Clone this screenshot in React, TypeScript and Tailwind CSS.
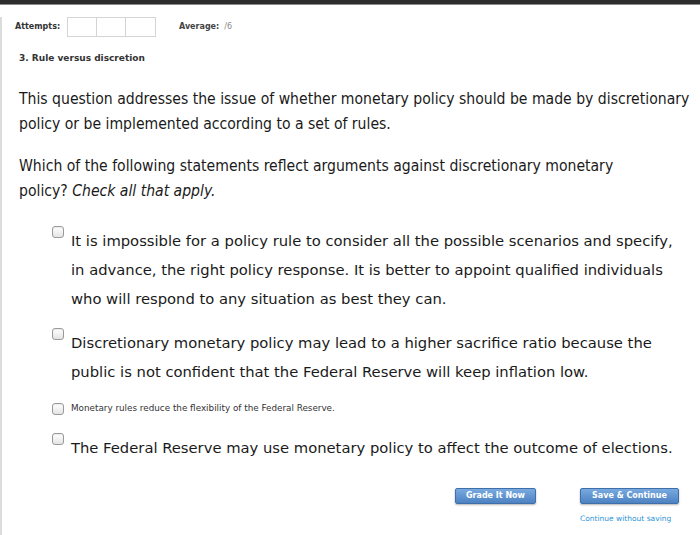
import React from "react";

const OPTIONS = [
  {
    id: "a",
    size: "large",
    lines: [
      "It is impossible for a policy rule to consider all the possible scenarios and specify,",
      "in advance, the right policy response. It is better to appoint qualified individuals",
      "who will respond to any situation as best they can.",
    ],
  },
  {
    id: "b",
    size: "large",
    lines: [
      "Discretionary monetary policy may lead to a higher sacrifice ratio because the",
      "public is not confident that the Federal Reserve will keep inflation low.",
    ],
  },
  {
    id: "c",
    size: "small",
    lines: ["Monetary rules reduce the flexibility of the Federal Reserve."],
  },
  {
    id: "d",
    size: "large",
    lines: ["The Federal Reserve may use monetary policy to affect the outcome of elections."],
  },
];

function Box() {
  return (
    <span className="block w-[12px] h-[12px] rounded-[3px] border border-[#9a9a9a] bg-gradient-to-b from-white to-[#e4e4e4] shadow-[inset_0_1px_1px_rgba(0,0,0,0.08)]" />
  );
}

export default function App() {
  return (
    <div className="w-[700px] h-[535px] bg-white overflow-hidden font-['DejaVu_Sans',sans-serif] text-[#222]">
      <div className="h-[5px] bg-[#2d2d2d] border-b border-[#8a8a8a]" />
      <div className="h-[530px] border-l-2 border-[#dcdcdc] pl-[13px]">
        <div className="flex items-center h-[20px] mt-[12px] text-[8px]">
          <span className="font-bold text-[#333] w-[52px]">Attempts:</span>
          <div className="flex h-[20px] border border-[#d4d4d4]">
            <div className="w-[29px] border-r border-[#d4d4d4]" />
            <div className="w-[29px] border-r border-[#d4d4d4]" />
            <div className="w-[29px]" />
          </div>
          <span className="ml-[23px] font-bold text-[#444]">Average:</span>
          <span className="ml-[5px] text-[#888]">/6</span>
        </div>

        <div className="mt-[15px] ml-[4px] text-[9px] font-bold text-[#333]">3. Rule versus discretion</div>

        <div className="ml-[4px] mt-[21px] font-['DejaVu_Sans_Condensed','DejaVu_Sans',sans-serif] text-[15.6px] leading-[25px] text-[#1a1a1a]">
          <p>
            This question addresses the issue of whether monetary policy should be made by discretionary
            <br />
            policy or be implemented according to a set of rules.
          </p>
          <p className="mt-[17px]">
            Which of the following statements reflect arguments against discretionary monetary
            <br />
            policy? <i>Check all that apply.</i>
          </p>
        </div>

        <div className="ml-[37px] mt-[22px] flex flex-col">
          {OPTIONS.map((opt) =>
            opt.size === "large" ? (
              <div key={opt.id} className="flex items-start gap-[7px] mb-[15px]">
                <span className="mt-0">
                  <Box />
                </span>
                <div className="text-[14.75px] leading-[29px] text-[#1a1a1a]">
                  {opt.lines.map((l, i) => (
                    <div key={i}>{l}</div>
                  ))}
                </div>
              </div>
            ) : (
              <div key={opt.id} className="flex items-center gap-[7px] mb-[16px] h-[16px]">
                <Box />
                <span className="text-[8.8px] text-[#333]">{opt.lines[0]}</span>
              </div>
            )
          )}
        </div>

        <div className="flex justify-end pr-[21px] mt-[11px] gap-[44px]">
          <button className="w-[81px] h-[16px] rounded-[2px] border border-[#3f6fa8] bg-gradient-to-b from-[#78a9e0] to-[#4d82c2] text-white text-[8px] font-bold shadow-[0_1px_2px_rgba(0,0,0,0.3)]">
            Grade It Now
          </button>
          <div className="flex flex-col">
            <button className="w-[99px] h-[16px] rounded-[2px] border border-[#3f6fa8] bg-gradient-to-b from-[#78a9e0] to-[#4d82c2] text-white text-[8px] font-bold shadow-[0_1px_2px_rgba(0,0,0,0.3)]">
              Save &amp; Continue
            </button>
            <span className="mt-[9px] text-[7.5px] text-[#2f95d8]">Continue without saving</span>
          </div>
        </div>
      </div>
    </div>
  );
}
